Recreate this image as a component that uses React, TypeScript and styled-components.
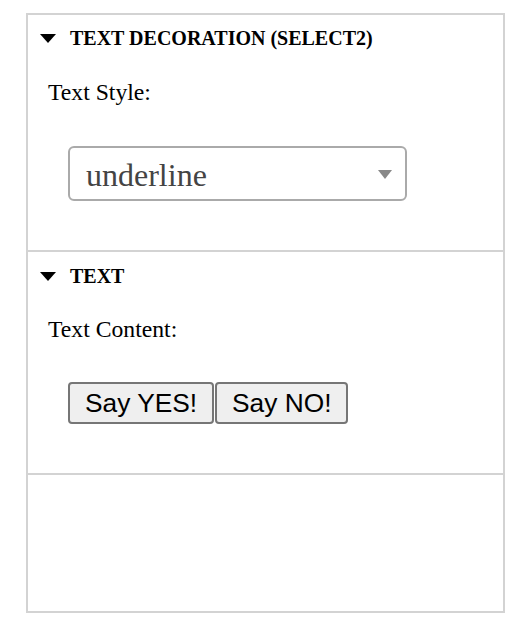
import React from "react";
import styled, { createGlobalStyle } from "styled-components";

const Global = createGlobalStyle`
  html, body { margin: 0; padding: 0; background: #ffffff; }
  body { font-family: "Liberation Serif", "Times New Roman", serif; color: #000; }
`;

const Page = styled.div`
  padding: 13px 0 0 26px;
`;

const Panel = styled.div`
  box-sizing: border-box;
  width: 479px;
  height: 600px;
  border: 2px solid #d3d3d3;
  display: flex;
  flex-direction: column;
`;

const Section = styled.section<{ $top: number; $fill?: boolean }>`
  border-bottom: ${(p) => (p.$fill ? "none" : "2px solid #d3d3d3")};
  padding: ${(p) => p.$top}px 0 49px 0;
  flex: ${(p) => (p.$fill ? "1" : "none")};
`;

const Header = styled.div`
  display: flex;
  align-items: center;
  padding-left: 12px;
  height: 24px;
  font-size: 20px;
  font-weight: bold;
  line-height: 24px;
  text-transform: uppercase;
`;

const Caret = styled.svg`
  width: 16px;
  height: 10px;
  margin-right: 14px;
  margin-top: 2px;
  flex: none;
`;

const Label = styled.div<{ $gap: number }>`
  margin: ${(p) => p.$gap}px 0 0 20px;
  font-size: 23.7px;
  line-height: 28px;
`;

const Control = styled.div<{ $gap: number }>`
  margin: ${(p) => p.$gap}px 0 0 40px;
  display: flex;
`;

const Select = styled.div`
  box-sizing: border-box;
  width: 339px;
  height: 55px;
  border: 2px solid #aaaaaa;
  border-radius: 6px;
  display: flex;
  align-items: center;
  justify-content: space-between;
  padding: 0 13px 0 16px;
  color: #444444;
  font-size: 32px;
  line-height: 51px;
`;

const SelectText = styled.span`
  padding-top: 4px;
`;

const Arrow = styled.span`
  width: 0;
  height: 0;
  border-style: solid;
  border-width: 9px 7px 0 7px;
  border-color: #888888 transparent transparent transparent;
  margin-top: 2px;
`;

const Button = styled.button`
  box-sizing: border-box;
  height: 42px;
  margin: 0 1px 0 0;
  padding: 0 15px;
  border: 2px solid #767676;
  border-radius: 4px;
  background: #efefef;
  color: #000;
  font-family: "Liberation Sans", Arial, sans-serif;
  font-size: 26.3px;
  line-height: 38px;
`;

const TriangleIcon = () => (
  <Caret viewBox="0 0 16 10">
    <polygon points="0,0 16,0 8,9" fill="#000" />
  </Caret>
);

export default function App() {
  return (
    <>
      <Global />
      <Page>
        <Panel>
          <Section $top={11}>
            <Header>
              <TriangleIcon />
              Text Decoration (Select2)
            </Header>
            <Label $gap={28}>Text Style:</Label>
            <Control $gap={40}>
              <Select>
                <SelectText>underline</SelectText>
                <Arrow />
              </Select>
            </Control>
          </Section>
          <Section $top={12}>
            <Header>
              <TriangleIcon />
              Text
            </Header>
            <Label $gap={27}>Text Content:</Label>
            <Control $gap={39}>
              <Button>Say YES!</Button>
              <Button>Say NO!</Button>
            </Control>
          </Section>
          <Section $top={0} $fill />
        </Panel>
      </Page>
    </>
  );
}
